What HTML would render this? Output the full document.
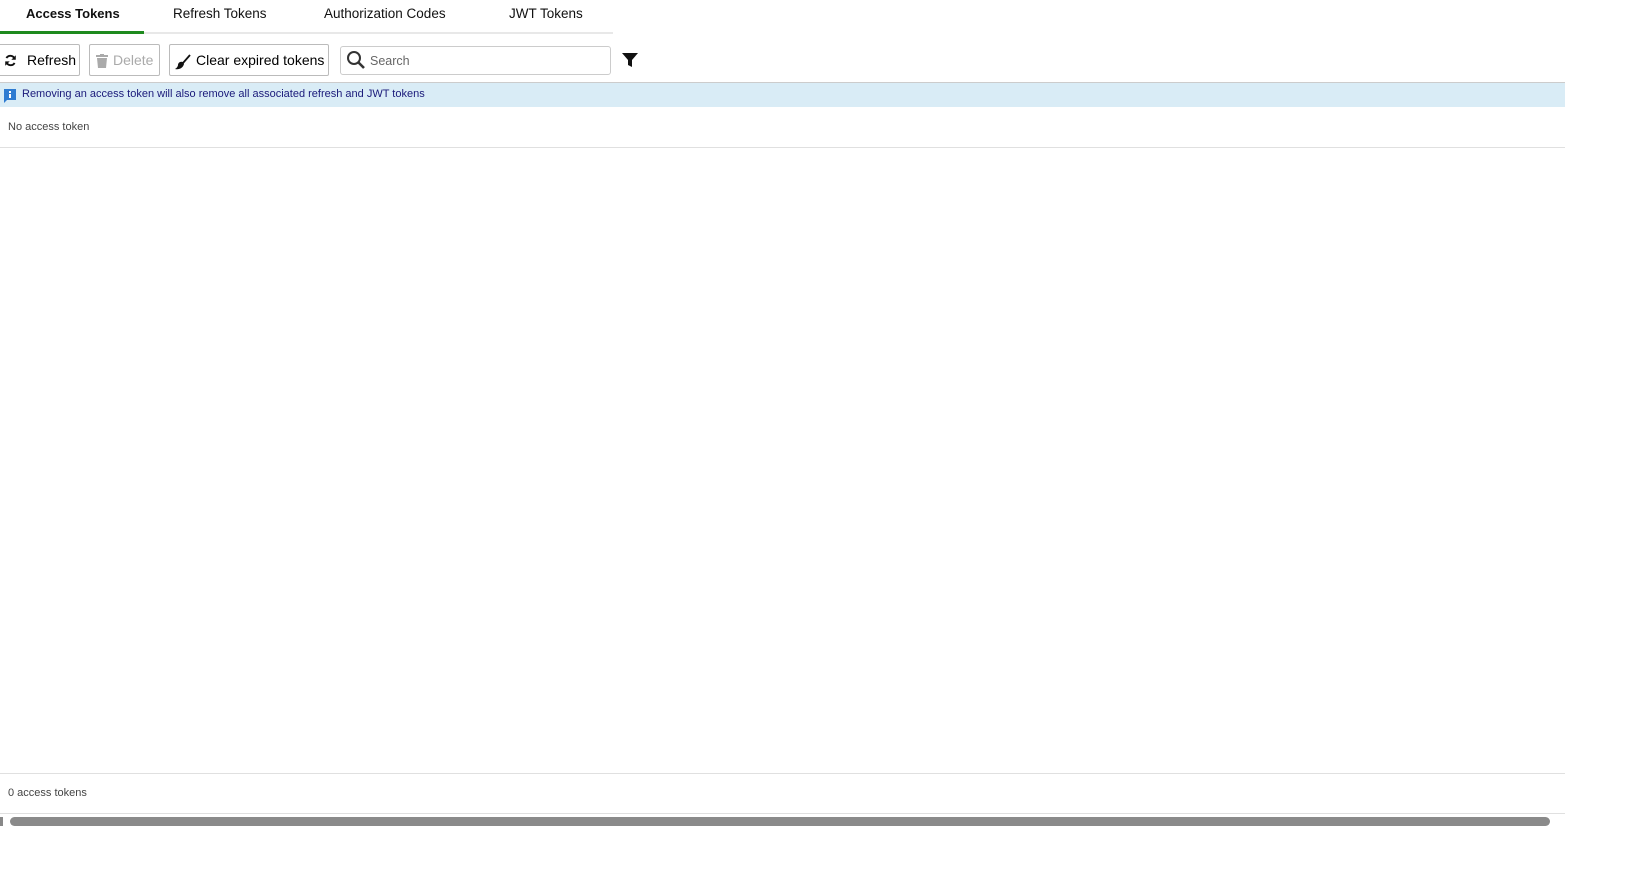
<!DOCTYPE html>
<html><head><meta charset="utf-8"><style>
*{box-sizing:border-box;margin:0;padding:0}
body{width:1650px;height:871px;background:#fff;font-family:"Liberation Sans",sans-serif;position:relative;overflow:hidden;color:#000}
.wrap{position:absolute;left:0;top:0;width:1565px;height:871px}
.tabs{position:absolute;left:0;top:0;width:613px;height:34px;border-bottom:2px solid #e8e8e8}
.tab{position:absolute;top:6px;font-size:13.5px;color:#111;white-space:nowrap}
.tab.act{font-weight:bold;font-size:13px}
.ul{position:absolute;left:0;top:31px;width:144px;height:3px;background:#1e8a1e}
.btn{position:absolute;top:44px;height:32px;border:1px solid #bbb;border-radius:2px;font-size:14px;line-height:30px;background:#fff;white-space:nowrap}
.btn svg{position:absolute;top:8px}
.search{position:absolute;left:340px;top:46px;width:271px;height:29px;border:1px solid #ccc;border-radius:3px}
.search span{position:absolute;left:29px;top:7px;font-size:12.5px;color:#666}
.hr{position:absolute;left:0;height:1px;background:#e0e0e0;width:1565px}
.info{position:absolute;left:0;top:83px;width:1565px;height:24px;background:#d9ecf6}
.info span{position:absolute;left:22px;top:5px;font-size:11px;color:#1a1a7a;white-space:nowrap}
.small{position:absolute;left:8px;font-size:11px;color:#444}
</style></head><body><div class="wrap">
<div class="tabs"></div>
<div class="tab act" style="left:26px">Access Tokens</div>
<div class="tab" style="left:173px">Refresh Tokens</div>
<div class="tab" style="left:324px">Authorization Codes</div>
<div class="tab" style="left:509px">JWT Tokens</div>
<div class="ul"></div>

<div class="btn" style="left:-2px;width:82px"><svg width="13" height="13" viewBox="0 0 16 16" style="left:5px;top:9px"><path d="M13 6A5.5 5.5 0 0 0 3 5" stroke="#111" stroke-width="2.4" fill="none"/><path d="M14.5 1.5v5.5H9z" fill="#111"/><path d="M3 10a5.5 5.5 0 0 0 10 1" stroke="#111" stroke-width="2.4" fill="none"/><path d="M1.5 14.5V9H7z" fill="#111"/></svg><span style="position:absolute;left:28px">Refresh</span></div>
<div class="btn" style="left:89px;width:71px;color:#aaa"><svg width="12" height="14" viewBox="0 0 12 14" style="left:6px;top:9px"><rect x="0" y="1" width="12" height="2" fill="#aaa"/><rect x="4" y="0" width="4" height="2" fill="#aaa"/><path d="M1 4h10l-1 10H2z" fill="#aaa"/></svg><span style="position:absolute;left:23px">Delete</span></div>
<div class="btn" style="left:169px;width:160px"><svg width="16" height="16" viewBox="0 0 16 16" style="left:5px;top:9px"><path d="M15 1L8 9" stroke="#111" stroke-width="1.8"/><path d="M8 8c-3-1-5 1-5 3 0 1-1 3-3 4 4 1 8-1 9-5z" fill="#111"/></svg><span style="position:absolute;left:26px">Clear expired tokens</span></div>

<div class="search"><svg width="20" height="20" viewBox="0 0 20 20" style="position:absolute;left:5px;top:3px"><circle cx="8" cy="8" r="6" stroke="#333" stroke-width="2" fill="none"/><path d="M12.5 12.5L18 18" stroke="#333" stroke-width="2.6"/></svg><span>Search</span></div>
<svg width="16" height="14" viewBox="0 0 16 14" style="position:absolute;left:622px;top:53px"><path d="M0 0h16L10 7v7l-4-2V7z" fill="#111"/></svg>

<div class="hr" style="top:82px;background:#ccc"></div>
<div class="info"><svg width="12" height="14" viewBox="0 0 12 14" style="position:absolute;left:4px;top:6px"><rect width="12" height="11" fill="#2e7bd1"/><path d="M0 10v4l3-3z" fill="#2e7bd1"/><rect x="5" y="2" width="2" height="2" fill="#fff"/><rect x="5" y="5" width="2" height="4" fill="#fff"/></svg><span>Removing an access token will also remove all associated refresh and JWT tokens</span></div>
<div class="small" style="top:121px">No access token</div>
<div class="hr" style="top:147px"></div>
<div class="hr" style="top:773px"></div>
<div class="small" style="top:787px">0 access tokens</div>
<div class="hr" style="top:813px"></div>
<div style="position:absolute;left:0;top:817px;width:3px;height:9px;background:#888"></div>
<div style="position:absolute;left:10px;top:817px;width:1540px;height:9px;border-radius:5px;background:#8a8a8a"></div>
</div></body></html>
